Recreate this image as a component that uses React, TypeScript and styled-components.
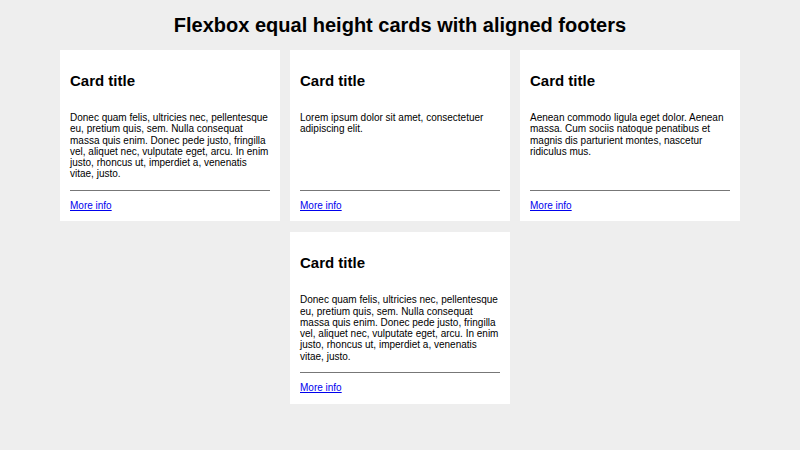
import React from 'react';
import styled, { createGlobalStyle } from 'styled-components';

const GlobalStyle = createGlobalStyle`
  body {
    margin: 0;
    background: #eeeeee;
    font-family: "Liberation Sans", Arial, sans-serif;
    font-size: 10px;
    color: #000;
  }
`;

const Page = styled.div`
  padding: 5px 60px;
`;

const Heading = styled.h1`
  margin: 9px 0 13px;
  font-size: 20px;
  font-weight: bold;
  text-align: center;
`;

const CardList = styled.div`
  display: flex;
  flex-wrap: wrap;
  justify-content: center;
  gap: 11px 10px;
`;

const Card = styled.div`
  width: 220px;
  box-sizing: border-box;
  padding: 0 10px 10px;
  background: #fff;
  display: flex;
  flex-direction: column;
`;

const CardTitle = styled.h2`
  margin: 22px 0 12px;
  font-size: 15px;
  font-weight: bold;
`;

const CardBody = styled.p`
  flex: 1;
  margin: 11px 0 10px;
  line-height: 11.3px;
`;

const CardFooter = styled.div`
  border-top: 1px solid #777;
  padding-top: 9px;
  line-height: 11.5px;

  a {
    color: #0000ee;
  }
`;

const longText =
  'Donec quam felis, ultricies nec, pellentesque eu, pretium quis, sem. Nulla consequat massa quis enim. Donec pede justo, fringilla vel, aliquet nec, vulputate eget, arcu. In enim justo, rhoncus ut, imperdiet a, venenatis vitae, justo.';

const cards = [
  longText,
  'Lorem ipsum dolor sit amet, consectetuer adipiscing elit.',
  'Aenean commodo ligula eget dolor. Aenean massa. Cum sociis natoque penatibus et magnis dis parturient montes, nascetur ridiculus mus.',
  longText,
];

const App: React.FC = () => {
  return (
    <Page>
      <GlobalStyle />
      <Heading>Flexbox equal height cards with aligned footers</Heading>
      <CardList>
        {cards.map((text, i) => (
          <Card key={i}>
            <CardTitle>Card title</CardTitle>
            <CardBody>{text}</CardBody>
            <CardFooter>
              <a href="#">More info</a>
            </CardFooter>
          </Card>
        ))}
      </CardList>
    </Page>
  );
};

export default App;
